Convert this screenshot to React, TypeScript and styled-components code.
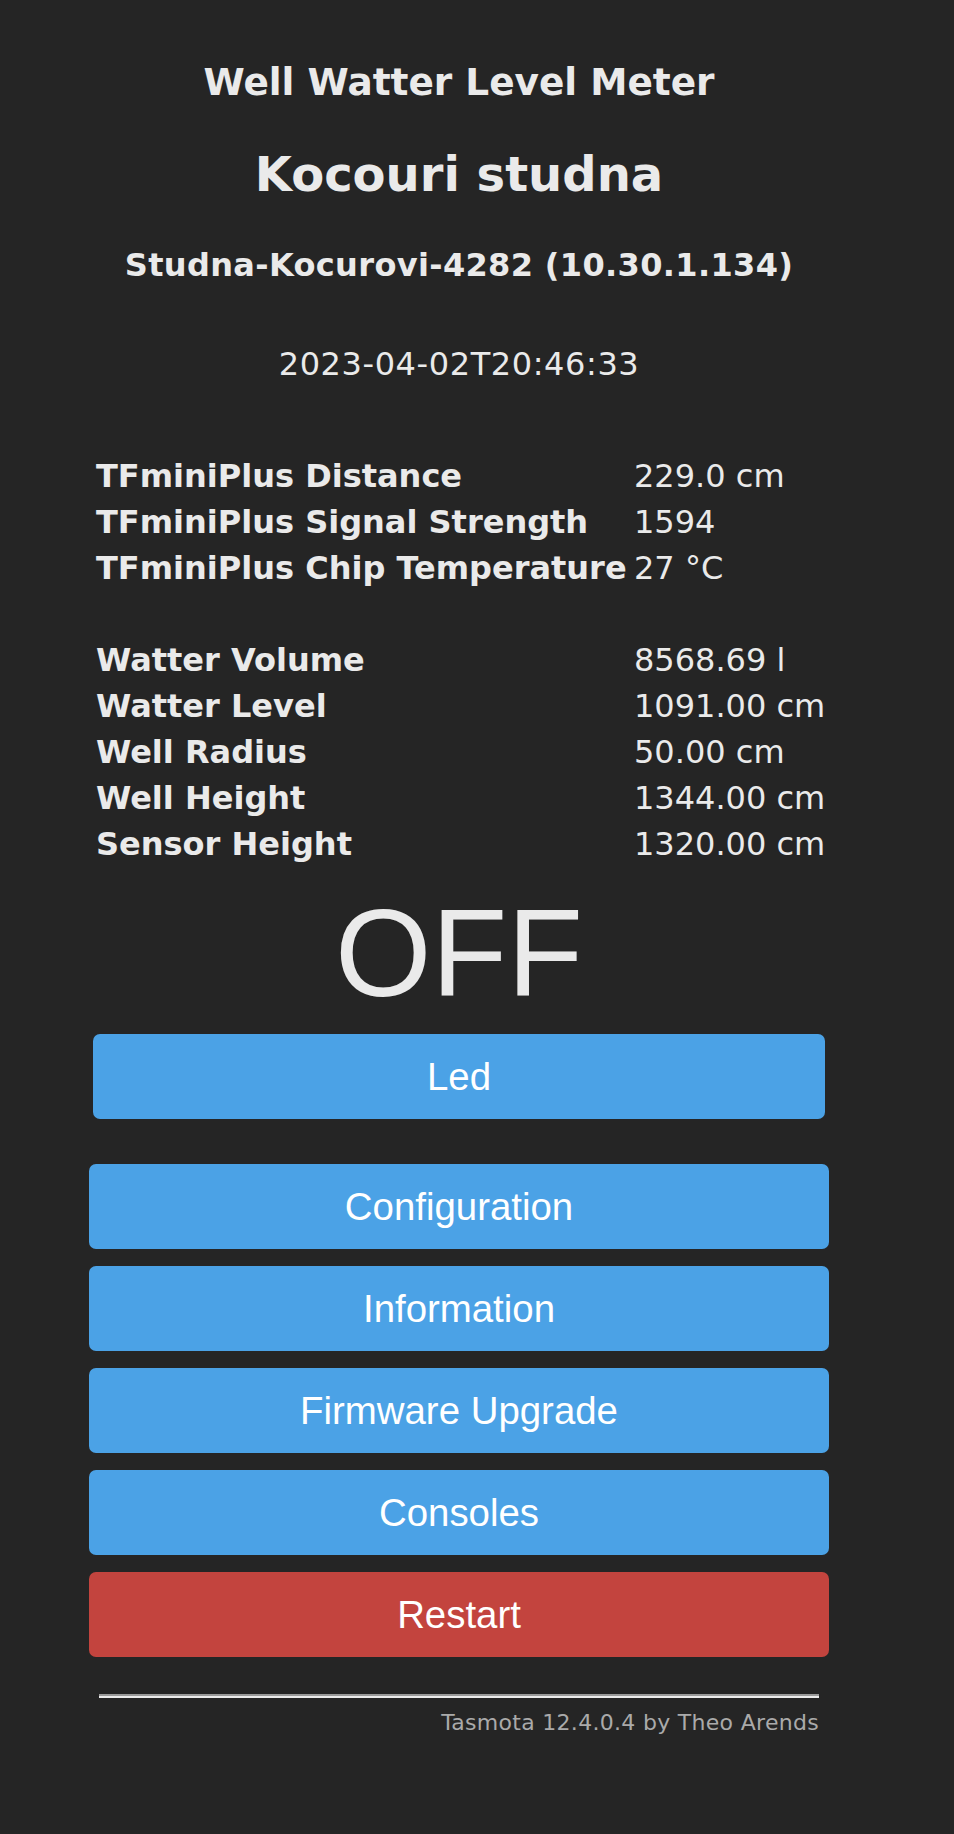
import React from 'react';
import styled, { createGlobalStyle } from 'styled-components';

interface Reading {
    label: string;
    value: string;
}

const GlobalStyle = createGlobalStyle`
    html, body {
        margin: 0;
        padding: 0;
        background: #252525;
    }
    body {
        min-height: 1834px;
        font-family: "DejaVu Sans", Verdana, sans-serif;
        color: #eaeaea;
    }
`;

const Page = styled.div`
    width: 740px;
    margin-left: 89px;
    padding-top: 60px;
    padding-bottom: 80px;
`;

const Header = styled.div`
    text-align: center;
    color: #eaeaea;
`;

const ModuleName = styled.h3`
    margin: 0;
    font-size: 37.44px;
    line-height: 44px;
    font-weight: bold;
`;

const DeviceName = styled.h2`
    margin: 42px 0 0;
    font-size: 48px;
    line-height: 56px;
    font-weight: bold;
`;

const HostName = styled.h4`
    margin: 44px 0 0;
    font-size: 32px;
    line-height: 38px;
    font-weight: bold;
    letter-spacing: 0.35px;
`;

const Timestamp = styled.div`
    margin-top: 61px;
    text-align: center;
    font-size: 32px;
    line-height: 38px;
    letter-spacing: 0.6px;
`;

const Readings = styled.div`
    margin-top: 70px;
    padding: 0 7px;
    display: grid;
    grid-template-columns: 538px 1fr;
    font-size: 32px;
    line-height: 46px;
`;

const Label = styled.div`
    font-weight: bold;
    white-space: nowrap;
`;

const Value = styled.div`
    white-space: nowrap;
`;

const Spacer = styled.div`
    grid-column: 1 / span 2;
    height: 46px;
`;

const PowerState = styled.div`
    margin-top: 21px;
    text-align: center;
    font-family: "Liberation Sans", Arial, sans-serif;
    font-size: 124px;
    line-height: 130px;
`;

const ToggleRow = styled.div`
    margin-top: 16px;
    padding: 0 4px;
`;

const Menu = styled.div`
    margin-top: 45px;
    display: flex;
    flex-direction: column;
    gap: 17px;
`;

const Button = styled.button<{ $danger?: boolean }>`
    display: block;
    width: 100%;
    height: 85px;
    border: 0;
    border-radius: 7px;
    padding: 0;
    background: ${(p) => (p.$danger ? '#c3443e' : '#4ba2e6')};
    color: #fff;
    font-family: "Liberation Sans", Arial, sans-serif;
    font-size: 38.4px;
    line-height: 85px;
    cursor: pointer;
`;

const Footer = styled.div`
    margin-top: 37px;
    padding: 0 10px;
    text-align: right;
`;

const Rule = styled.hr`
    margin: 0;
    height: 0;
    border: 0;
    border-top: 2px solid #9a9a9a;
    border-bottom: 2px solid #ececec;
`;

const Credit = styled.a`
    display: block;
    margin-top: 12px;
    font-size: 22px;
    line-height: 26px;
    letter-spacing: 0.3px;
    color: #aaa;
    text-decoration: none;
`;

const sensor: Reading[] = [
    { label: 'TFminiPlus Distance', value: '229.0 cm' },
    { label: 'TFminiPlus Signal Strength', value: '1594' },
    { label: 'TFminiPlus Chip Temperature', value: '27 °C' },
];

const well: Reading[] = [
    { label: 'Watter Volume', value: '8568.69 l' },
    { label: 'Watter Level', value: '1091.00 cm' },
    { label: 'Well Radius', value: '50.00 cm' },
    { label: 'Well Height', value: '1344.00 cm' },
    { label: 'Sensor Height', value: '1320.00 cm' },
];

const menu = ['Configuration', 'Information', 'Firmware Upgrade', 'Consoles'];

function renderReading(r: Reading) {
    return (
        <React.Fragment key={r.label}>
            <Label>{r.label}</Label>
            <Value>{r.value}</Value>
        </React.Fragment>
    );
}

export default function App() {
    return (
        <>
            <GlobalStyle />
            <Page>
                <Header>
                    <ModuleName>Well Watter Level Meter</ModuleName>
                    <DeviceName>Kocouri studna</DeviceName>
                    <HostName>Studna-Kocurovi-4282 (10.30.1.134)</HostName>
                </Header>
                <Timestamp>2023-04-02T20:46:33</Timestamp>
                <Readings>
                    {sensor.map(renderReading)}
                    <Spacer />
                    {well.map(renderReading)}
                </Readings>
                <PowerState>OFF</PowerState>
                <ToggleRow>
                    <Button>Led</Button>
                </ToggleRow>
                <Menu>
                    {menu.map((m) => (
                        <Button key={m}>{m}</Button>
                    ))}
                    <Button $danger>Restart</Button>
                </Menu>
                <Footer>
                    <Rule />
                    <Credit href="#">Tasmota 12.4.0.4 by Theo Arends</Credit>
                </Footer>
            </Page>
        </>
    );
}
